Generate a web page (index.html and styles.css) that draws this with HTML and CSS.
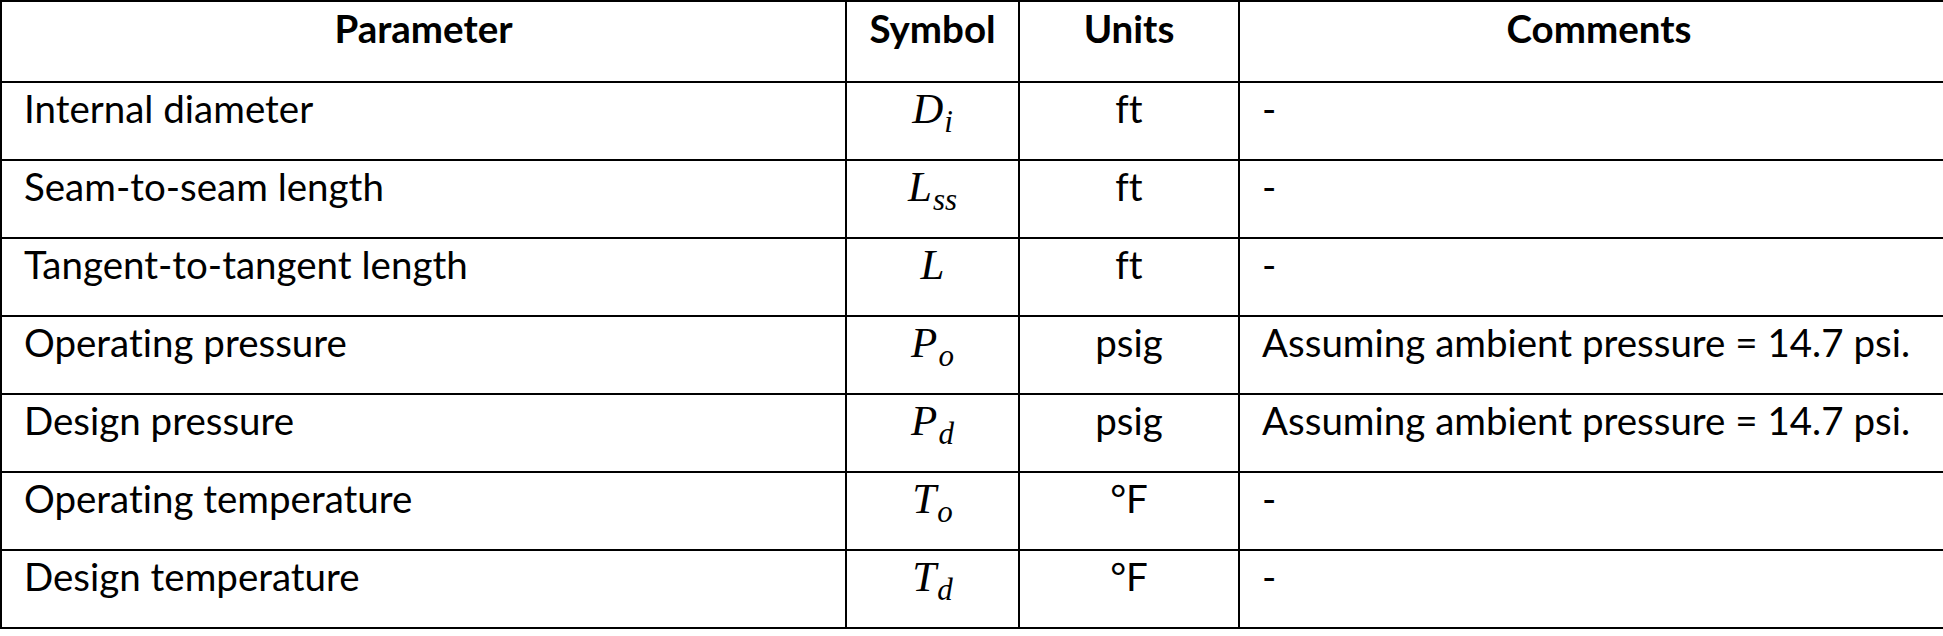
FILE: index.html
```html
<!DOCTYPE html>
<html>
<head>
<meta charset="utf-8">
<link rel="stylesheet" href="styles.css">
</head>
<body>
<table class="params">
  <thead>
    <tr class="head">
      <th class="c-param">Parameter</th>
      <th class="c-sym">Symbol</th>
      <th class="c-unit">Units</th>
      <th class="c-comm">Comments</th>
    </tr>
  </thead>
  <tbody>
    <tr>
      <td class="c-param">Internal diameter</td>
      <td class="c-sym"><span class="math">D<sub>i</sub></span></td>
      <td class="c-unit">ft</td>
      <td class="c-comm">-</td>
    </tr>
    <tr>
      <td class="c-param">Seam-to-seam length</td>
      <td class="c-sym"><span class="math">L<sub>ss</sub></span></td>
      <td class="c-unit">ft</td>
      <td class="c-comm">-</td>
    </tr>
    <tr>
      <td class="c-param">Tangent-to-tangent length</td>
      <td class="c-sym"><span class="math">L</span></td>
      <td class="c-unit">ft</td>
      <td class="c-comm">-</td>
    </tr>
    <tr>
      <td class="c-param">Operating pressure</td>
      <td class="c-sym"><span class="math">P<sub>o</sub></span></td>
      <td class="c-unit">psig</td>
      <td class="c-comm">Assuming ambient pressure = 14.7 psi.</td>
    </tr>
    <tr>
      <td class="c-param">Design pressure</td>
      <td class="c-sym"><span class="math">P<sub>d</sub></span></td>
      <td class="c-unit">psig</td>
      <td class="c-comm">Assuming ambient pressure = 14.7 psi.</td>
    </tr>
    <tr>
      <td class="c-param">Operating temperature</td>
      <td class="c-sym"><span class="math">T<sub>o</sub></span></td>
      <td class="c-unit">°F</td>
      <td class="c-comm">-</td>
    </tr>
    <tr>
      <td class="c-param">Design temperature</td>
      <td class="c-sym"><span class="math">T<sub>d</sub></span></td>
      <td class="c-unit">°F</td>
      <td class="c-comm">-</td>
    </tr>
  </tbody>
</table>
</body>
</html>
```
FILE: styles.css
```css
html, body {
  margin: 0;
  padding: 0;
  background: #fff;
  overflow: hidden;
}
body {
  font-family: Lato, "Liberation Sans", sans-serif;
  font-variant-ligatures: none;
  color: #000;
}
.params {
  border-collapse: collapse;
  table-layout: fixed;
  width: 1960px;
  margin: 0;
}
.params th,
.params td {
  border: 2px solid #000;
  padding: 1px 22px 0 22px;
  vertical-align: top;
  font-size: 38.5px;
  line-height: 48px;
  height: 78px;
  box-sizing: border-box;
  white-space: nowrap;
}
.params .head th {
  font-weight: 700;
  height: 81px;
  padding-top: 2px;
  text-align: center;
}
.c-param { width: 845px; text-align: left; }
.c-sym { width: 173px; text-align: center; }
.c-unit { width: 220px; text-align: center; }
.c-comm { text-align: left; }
.params .c-sym, .params .c-unit { text-align: center; }
.math {
  font-family: "Liberation Serif", "DejaVu Serif", serif;
  font-style: italic;
  font-size: 43px;
}
.math sub {
  font-size: 31px;
  line-height: 0;
  vertical-align: -9px;
  margin-left: 1px;
}
```
